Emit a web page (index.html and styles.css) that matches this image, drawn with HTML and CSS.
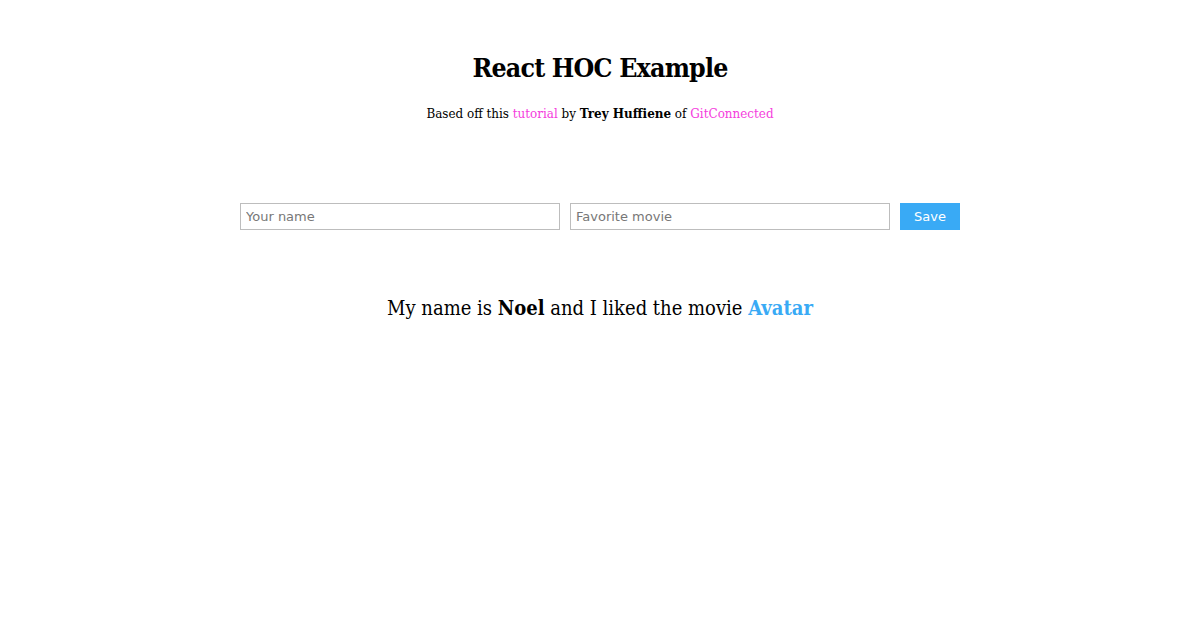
FILE: index.html
```html
<!DOCTYPE html>
<html>
<head>
<meta charset="utf-8">
<link rel="stylesheet" href="styles.css">
</head>
<body>
<div class="app">
  <header class="header">
    <h1 class="title">React HOC Example</h1>
    <p class="subtitle">Based off this <a class="link" href="#">tutorial</a> by <strong>Trey Huffiene</strong> of <a class="link" href="#">GitConnected</a></p>
  </header>
  <form class="form">
    <input class="field" type="text" placeholder="Your name">
    <input class="field" type="text" placeholder="Favorite movie">
    <button class="save" type="button">Save</button>
  </form>
  <p class="result">My name is <strong>Noel</strong> and I liked the movie <strong class="movie">Avatar</strong></p>
</div>
</body>
</html>
```
FILE: styles.css
```css
html, body {
  margin: 0;
  padding: 0;
  background: #fff;
}
body {
  font-family: "DejaVu Serif", serif;
  font-stretch: condensed;
  color: #000;
}
.app {
  display: flex;
  flex-direction: column;
  align-items: center;
  padding-top: 50px;
}
.header {
  text-align: center;
}
.title {
  margin: 0;
  font-size: 26.5px;
  font-weight: bold;
  line-height: 36px;
  letter-spacing: -0.8px;
}
.subtitle {
  margin: 19px 0 0;
  font-size: 13.3px;
  line-height: 18px;
}
.link {
  color: #f53ddd;
  text-decoration: none;
}
.form {
  display: flex;
  gap: 10px;
  margin-top: 80px;
  width: 720px;
}
.field {
  box-sizing: border-box;
  width: 320px;
  height: 27px;
  border: 1px solid #bdbdbd;
  padding: 0 5px;
  font-family: "DejaVu Sans", sans-serif;
  font-stretch: normal;
  font-size: 13px;
  color: #333;
  outline: none;
}
.field::placeholder {
  color: #777;
}
.save {
  box-sizing: border-box;
  width: 60px;
  height: 27px;
  border: none;
  background: #39aaf5;
  color: #fff;
  font-family: "DejaVu Sans", sans-serif;
  font-stretch: normal;
  font-size: 13px;
  padding: 0;
}
.result {
  margin: 64px 0 0;
  font-size: 20px;
  line-height: 28px;
}
.movie {
  color: #39aaf5;
}
```
